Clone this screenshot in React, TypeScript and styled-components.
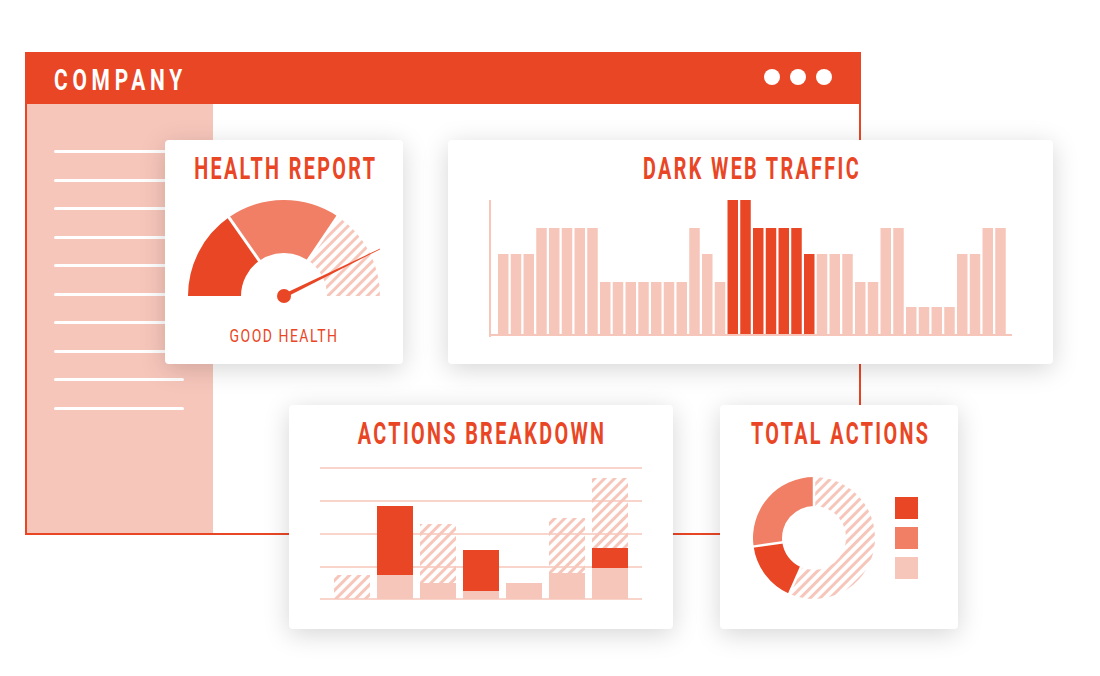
import styled, { createGlobalStyle } from 'styled-components';

const RED = '#e94625';
const SALMON = '#f07f65';
const PINK = '#f7c6bb';

const GlobalStyle = createGlobalStyle`
  html, body {
    margin: 0;
    padding: 0;
    background: #fff;
  }
  body {
    font-family: Roboto, 'Liberation Sans', sans-serif;
  }
`;

const Stage = styled.div`
  position: relative;
  width: 1100px;
  height: 676px;
  overflow: hidden;
  padding: 52px 0 0 25px;
  box-sizing: border-box;
`;

const BrowserWindow = styled.div`
  width: 836px;
  height: 483px;
  border: 2px solid ${RED};
  box-sizing: border-box;
  display: flex;
  flex-direction: column;
`;

const Header = styled.div`
  height: 50px;
  flex: none;
  background: ${RED};
  display: flex;
  align-items: center;
  justify-content: space-between;
  padding: 0 27px;
`;

const Brand = styled.div`
  color: #fff;
  font-weight: 700;
  font-size: 22px;
  line-height: 22px;
  letter-spacing: 5px;
  margin-top: 2px;
  transform: scale(0.95, 1.38);
  transform-origin: left center;
`;

const Dots = styled.div`
  display: flex;
  gap: 10px;
  margin-bottom: 4px;
`;

const Dot = styled.span`
  width: 16px;
  height: 16px;
  border-radius: 50%;
  background: #fff;
`;

const BrowserBody = styled.div`
  flex: 1;
  display: flex;
`;

const Sidebar = styled.div`
  width: 186px;
  background: ${PINK};
  padding: 46px 0 0 27px;
  box-sizing: border-box;
  display: flex;
  flex-direction: column;
  gap: 25.5px;
`;

const SideLine = styled.span`
  width: 130px;
  height: 3px;
  border-radius: 2px;
  background: #fff;
`;

const CardLayer = styled.div`
  position: absolute;
  inset: 0;
  padding-top: 140px;
  display: flex;
  flex-direction: column;
  gap: 41px;
`;

const CardRow = styled.div<{ $offset: number; $gap: number }>`
  display: flex;
  gap: ${p => p.$gap}px;
  padding-left: ${p => p.$offset}px;
`;

const Card = styled.section<{ $w: number }>`
  width: ${p => p.$w}px;
  height: 224px;
  background: #fff;
  border-radius: 4px;
  box-shadow: 0 5px 26px rgba(0, 0, 0, 0.17);
  display: flex;
  flex-direction: column;
  align-items: center;
  padding-top: 18px;
  box-sizing: border-box;
`;

const Title = styled.h2`
  margin: 0 -2.6px 0 0;
  font-weight: 700;
  font-size: 22px;
  line-height: 22px;
  letter-spacing: 2.6px;
  color: ${RED};
  white-space: nowrap;
  transform: scale(0.9, 1.4);
`;

const ChartArea = styled.div<{ $top: number }>`
  margin-top: ${p => p.$top}px;
  display: flex;
  svg {
    display: block;
  }
`;

const GaugeLabel = styled.p`
  margin: 23px 0 0;
  font-weight: 400;
  font-size: 14px;
  line-height: 14px;
  letter-spacing: 1.5px;
  color: ${RED};
  transform: scaleY(1.3);
`;

const DonutRow = styled.div`
  align-self: flex-start;
  margin-top: 31px;
  padding-left: 32px;
  display: flex;
  align-items: center;
  gap: 19px;
`;

const Legend = styled.div`
  display: flex;
  flex-direction: column;
  gap: 8px;
`;

const Swatch = styled.span<{ $color: string }>`
  width: 23px;
  height: 22px;
  background: ${p => p.$color};
`;

// annular sector, angles in degrees, counter-clockwise from a0 to a1
const pt = (cx: number, cy: number, r: number, a: number) => {
  const rad = (a * Math.PI) / 180;
  return `${(cx + r * Math.cos(rad)).toFixed(2)} ${(cy - r * Math.sin(rad)).toFixed(2)}`;
};

const sector = (cx: number, cy: number, r0: number, r1: number, a0: number, a1: number) => {
  const large = a1 - a0 > 180 ? 1 : 0;
  return `M ${pt(cx, cy, r1, a0)} A ${r1} ${r1} 0 ${large} 0 ${pt(cx, cy, r1, a1)} L ${pt(cx, cy, r0, a1)} A ${r0} ${r0} 0 ${large} 1 ${pt(cx, cy, r0, a0)} Z`;
};

const Hatch = ({ id }: { id: string }) => (
  <defs>
    <pattern id={id} width="7" height="7" patternUnits="userSpaceOnUse" patternTransform="rotate(45)">
      <rect width="3" height="7" fill={PINK} />
    </pattern>
  </defs>
);

const Gauge = () => {
  const cx = 100;
  const cy = 96;
  const r0 = 43;
  const r1 = 96;
  const sep = (a: number) => (
    <line
      x1={cx + (r0 - 1) * Math.cos((a * Math.PI) / 180)}
      y1={cy - (r0 - 1) * Math.sin((a * Math.PI) / 180)}
      x2={cx + (r1 + 1) * Math.cos((a * Math.PI) / 180)}
      y2={cy - (r1 + 1) * Math.sin((a * Math.PI) / 180)}
      stroke="#fff"
      strokeWidth="3"
    />
  );
  return (
    <svg width="200" height="106" viewBox="0 0 200 106">
      <Hatch id="hatch-gauge" />
      <path d={sector(cx, cy, r0, r1, 125, 180)} fill={RED} />
      <path d={sector(cx, cy, r0, r1, 56, 125)} fill={SALMON} />
      <path d={sector(cx, cy, r0, r1, 0, 56)} fill="url(#hatch-gauge)" />
      {sep(125)}
      {sep(56)}
      <polygon points="100.9,97.8 99.1,94.2 196.2,48.6 195.8,49.4" fill={RED} />
      <circle cx={cx} cy={cy} r="7" fill={RED} />
    </svg>
  );
};

const T = 135;
const H = 107;
const M = 81;
const L = 53;
const Z = 28;

const traffic: [number, boolean][] = [
  [M, false], [M, false], [M, false],
  [H, false], [H, false], [H, false], [H, false], [H, false],
  [L, false], [L, false], [L, false], [L, false], [L, false], [L, false], [L, false],
  [H, false], [M, false], [L, false],
  [T, true], [T, true], [H, true], [H, true], [H, true], [H, true], [M, true],
  [M, false], [M, false], [M, false],
  [L, false], [L, false], [H, false], [H, false],
  [Z, false], [Z, false], [Z, false], [Z, false],
  [M, false], [M, false], [H, false], [H, false],
];

const TrafficChart = () => (
  <svg width="526" height="140" viewBox="0 0 526 140">
    {traffic.map(([h, dark], i) => (
      <rect key={i} x={10 + i * 12.75} y={137 - h} width="10.5" height={h} fill={dark ? RED : PINK} />
    ))}
    <rect x="1" y="2" width="2" height="137" fill={PINK} />
    <rect x="1" y="136" width="523" height="2" fill={PINK} />
  </svg>
);

type Seg = ['light' | 'red' | 'hatch', number];

const breakdown: Seg[][] = [
  [['hatch', 24]],
  [['light', 24], ['red', 69]],
  [['light', 16], ['hatch', 59]],
  [['light', 8], ['red', 41]],
  [['light', 16]],
  [['light', 26], ['hatch', 55]],
  [['light', 31], ['red', 20], ['hatch', 70]],
];

const segFill = { light: PINK, red: RED, hatch: 'url(#hatch-bars)' };

const BreakdownChart = () => (
  <svg width="326" height="136" viewBox="0 0 326 136">
    <Hatch id="hatch-bars" />
    {[2, 35, 68, 101, 133].map(y => (
      <rect key={y} x="2" y={y - 0.75} width="322" height="1.5" fill={PINK} />
    ))}
    {breakdown.map((segs, i) => {
      let base = 133;
      return segs.map(([kind, h], j) => {
        base -= h;
        return <rect key={`${i}-${j}`} x={16 + i * 43} y={base} width="36" height={h} fill={segFill[kind]} />;
      });
    })}
  </svg>
);

const Donut = () => {
  const c = 62;
  const r0 = 32;
  const r1 = 61;
  const sep = (a: number) => (
    <line
      x1={c + (r0 - 1) * Math.cos((a * Math.PI) / 180)}
      y1={c - (r0 - 1) * Math.sin((a * Math.PI) / 180)}
      x2={c + (r1 + 1) * Math.cos((a * Math.PI) / 180)}
      y2={c - (r1 + 1) * Math.sin((a * Math.PI) / 180)}
      stroke="#fff"
      strokeWidth="2.5"
    />
  );
  return (
    <svg width="124" height="124" viewBox="0 0 124 124">
      <Hatch id="hatch-donut" />
      <path d={sector(c, c, r0, r1, 90, 188)} fill={SALMON} />
      <path d={sector(c, c, r0, r1, 188, 246)} fill={RED} />
      <path d={sector(c, c, r0, r1, 246, 450)} fill="url(#hatch-donut)" />
      {sep(90)}
      {sep(188)}
      {sep(246)}
    </svg>
  );
};

const App = () => (
  <>
    <GlobalStyle />
    <Stage>
      <BrowserWindow>
        <Header>
          <Brand>COMPANY</Brand>
          <Dots>
            <Dot />
            <Dot />
            <Dot />
          </Dots>
        </Header>
        <BrowserBody>
          <Sidebar>
            {Array.from({ length: 10 }, (_, i) => (
              <SideLine key={i} />
            ))}
          </Sidebar>
        </BrowserBody>
      </BrowserWindow>

      <CardLayer>
        <CardRow $offset={165} $gap={45}>
          <Card $w={238}>
            <Title>HEALTH REPORT</Title>
            <ChartArea $top={20}>
              <Gauge />
            </ChartArea>
            <GaugeLabel>GOOD HEALTH</GaugeLabel>
          </Card>
          <Card $w={605}>
            <Title>DARK WEB TRAFFIC</Title>
            <ChartArea $top={18}>
              <TrafficChart />
            </ChartArea>
          </Card>
        </CardRow>
        <CardRow $offset={289} $gap={47}>
          <Card $w={384}>
            <Title>ACTIONS BREAKDOWN</Title>
            <ChartArea $top={21}>
              <BreakdownChart />
            </ChartArea>
          </Card>
          <Card $w={238}>
            <Title>TOTAL ACTIONS</Title>
            <DonutRow>
              <Donut />
              <Legend>
                <Swatch $color={RED} />
                <Swatch $color={SALMON} />
                <Swatch $color={PINK} />
              </Legend>
            </DonutRow>
          </Card>
        </CardRow>
      </CardLayer>
    </Stage>
  </>
);

export default App;
